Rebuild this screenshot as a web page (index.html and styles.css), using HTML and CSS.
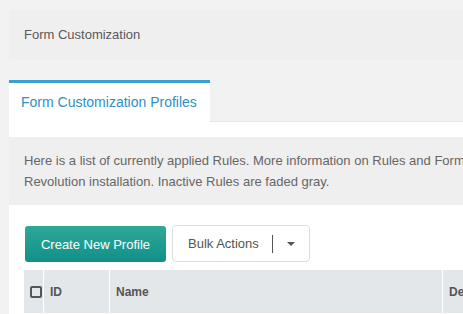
FILE: index.html
```html
<!DOCTYPE html>
<html>
<head>
<meta charset="utf-8">
<link rel="stylesheet" href="styles.css">
</head>
<body>
<div class="page">
  <div class="header">Form Customization</div>
  <div class="tabs">
    <div class="tab active">Form Customization Profiles</div>
  </div>
  <div class="panel">
    <div class="info">
      <span class="line">Here is a list of currently applied Rules. More information on Rules and Form Customization can be found in the documentation of your MODX</span>
      <span class="line">Revolution installation. Inactive Rules are faded gray.</span>
    </div>
    <div class="toolbar">
      <button class="btn primary">Create New Profile</button>
      <button class="btn split">Bulk Actions<span class="sep"></span><span class="caret"></span></button>
    </div>
    <div class="grid-head">
      <div class="col chk"><span class="box"></span></div>
      <div class="col id">ID</div>
      <div class="col name">Name</div>
      <div class="col desc">Description</div>
    </div>
  </div>
</div>
</body>
</html>
```
FILE: styles.css
```css
html, body {
  margin: 0;
  padding: 0;
  overflow: hidden;
  background: #f2f2f2;
}
body {
  font-family: "Liberation Sans", Arial, Helvetica, sans-serif;
  color: #555;
}
.page {
  width: 900px;
  height: 314px;
  overflow: hidden;
  padding: 10px 0 0 9px;
  box-sizing: border-box;
}
.header {
  height: 50px;
  line-height: 50px;
  background: #efefef;
  padding-left: 15px;
  font-size: 13px;
  color: #5a5a5a;
}
.tabs {
  margin-top: 20px;
  display: flex;
  border-bottom: 1px solid #e6e6e6;
  height: 41px;
}
.tab {
  background: #fff;
  border-top: 3px solid #3a9fd3;
  color: #2f8fc6;
  font-size: 14px;
  padding: 0 13px 0 12px;
  width: 176px;
  height: 39px;
  line-height: 38px;
  margin-bottom: -1px;
}
.panel {
  background: #fff;
  padding-top: 15px;
  height: 200px;
}
.info {
  background: #efefef;
  padding: 13px 15px;
  font-size: 13px;
  line-height: 21px;
  color: #666;
}
.line {
  display: block;
  white-space: nowrap;
}
.toolbar {
  display: flex;
  align-items: center;
  gap: 6px;
  margin: 20px 0 0 16px;
}
.btn {
  font-family: inherit;
  font-size: 13px;
  border-radius: 3px;
  cursor: pointer;
}
.primary {
  height: 36px;
  width: 141px;
  border: none;
  color: #fff;
  background: linear-gradient(#2ea897, #11908a);
  margin-top: 1px;
}
.split {
  height: 37px;
  width: 138px;
  background: #fff;
  border: 1px solid #dedede;
  color: #555;
  display: flex;
  align-items: center;
  padding: 0 0 0 15px;
  border-radius: 4px;
}
.sep {
  width: 1px;
  height: 18px;
  background: #555;
  margin-left: 13px;
}
.caret {
  width: 0;
  height: 0;
  border-left: 4px solid transparent;
  border-right: 4px solid transparent;
  border-top: 4px solid #555;
  margin-left: 14px;
}
.grid-head {
  margin: 8px 0 0 15px;
  display: flex;
  height: 43px;
  background: #e4e7ea;
  font-size: 12px;
  font-weight: bold;
  color: #555;
}
.col {
  display: flex;
  align-items: center;
  border-right: 1px solid #fff;
  padding-left: 6px;
  box-sizing: border-box;
}
.chk {
  width: 20px;
}
.box {
  width: 8px;
  height: 8px;
  border: 2px solid #555;
  border-radius: 2px;
}
.id {
  width: 66px;
}
.name {
  width: 333px;
}
.desc {
  width: 300px;
  border-right: none;
}
```
